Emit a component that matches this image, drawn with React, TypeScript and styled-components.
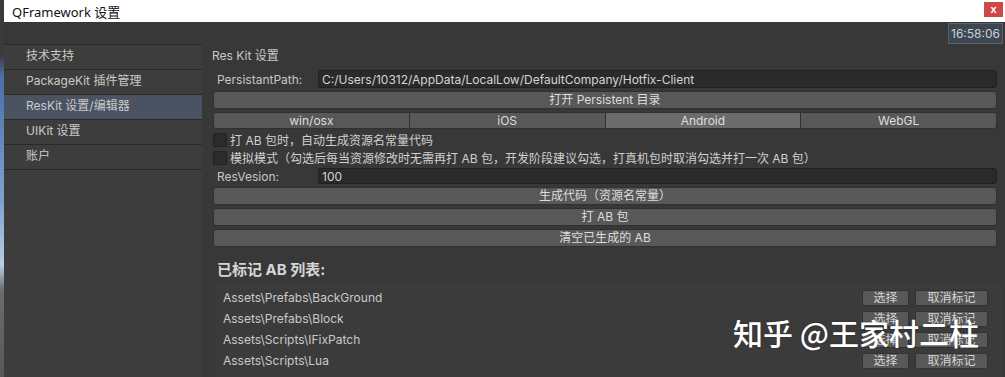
import styled, { createGlobalStyle } from 'styled-components';

const GlobalStyle = createGlobalStyle`
    html, body {
        margin: 0;
        padding: 0;
        background: #383838;
    }
    body {
        font-family: Inter, "Noto Sans CJK SC", sans-serif;
        font-size: 12px;
    }
`;

const Screen = styled.div`
    position: relative;
    width: 1005px;
    height: 377px;
    display: flex;
    overflow: hidden;
`;

// the editor behind the window, only a sliver of it shows
const EdgeStrip = styled.div`
    width: 4px;
    background: linear-gradient(
        to bottom,
        #3a3a3a 0,
        #3a3a3a 55px,
        #4a6ea6 75px,
        #7ea2cf 200px,
        #b9cde2 265px,
        #6c6c6c 290px,
        #585858 100%
    );
`;

const Frame = styled.div`
    flex: 1;
    display: flex;
    flex-direction: column;
`;

const TitleBar = styled.div`
    height: 22px;
    background: #ffffff;
    display: flex;
    align-items: center;
    justify-content: space-between;
    padding-left: 8px;
`;

const TitleText = styled.span`
    font-family: "Noto Sans", "Noto Sans CJK SC", sans-serif;
    font-size: 13px;
    color: #111;
`;

const CloseButton = styled.div`
    width: 19px;
    height: 15px;
    margin-right: 2px;
    margin-top: -4px;
    background: #cf4747;
    color: #fff;
    font-family: "Liberation Sans", sans-serif;
    font-size: 11px;
    font-weight: bold;
    line-height: 14px;
    text-align: center;
`;

const Body = styled.div`
    flex: 1;
    background: #383838;
    display: flex;
    flex-direction: column;
    min-height: 0;
`;

const TopRow = styled.div`
    height: 22px;
    display: flex;
    justify-content: flex-end;
    padding-right: 2px;
`;

const Clock = styled.div`
    margin-top: 1px;
    height: 19px;
    padding: 0 2px;
    background: #3d4752;
    border: 1px solid #56616c;
    color: #c9d0d6;
    line-height: 19px;
`;

const MainRow = styled.div`
    flex: 1;
    display: flex;
    min-height: 0;
`;

const Sidebar = styled.div`
    width: 198px;
    background: #3d3d3d;
    border-top: 1px solid #2c2c2c;
    box-sizing: border-box;
`;

const SideItem = styled.div<{ $active?: boolean }>`
    height: 24px;
    line-height: 22px;
    padding-left: 22px;
    border-bottom: 1px solid #2a2a2a;
    color: #cacaca;
    background: ${({ $active }) => ($active ? '#4b5363' : 'transparent')};
`;

const Content = styled.div`
    flex: 1;
    display: flex;
    flex-direction: column;
    padding: 0 8px 0 11px;
    min-width: 0;
`;

const Stack = styled.div`
    display: flex;
    flex-direction: column;
    gap: 3px;
`;

const SectionTitle = styled.div`
    height: 23px;
    line-height: 23px;
    margin-left: -1px;
    color: #c8c8c8;
`;

const FieldRow = styled.div<{ $h: number }>`
    display: flex;
    align-items: center;
    height: ${({ $h }) => $h}px;
`;

const Label = styled.span`
    width: 105px;
    flex-shrink: 0;
    padding-left: 4px;
    box-sizing: border-box;
    color: #c6c6c6;
`;

const Field = styled.div`
    flex: 1;
    height: 100%;
    box-sizing: border-box;
    background: #2a2a2a;
    border: 1px solid #212121;
    border-radius: 3px;
    padding: 0 3px;
    color: #d4d4d4;
    display: flex;
    align-items: center;
    white-space: nowrap;
`;

const Button = styled.div`
    height: 18px;
    box-sizing: border-box;
    background: #585858;
    border: 1px solid #303030;
    border-radius: 3px;
    color: #dedede;
    text-align: center;
    line-height: 16px;
`;

const Toolbar = styled.div`
    display: flex;
    height: 17px;
`;

const Segment = styled.div<{ $active?: boolean }>`
    flex: 1;
    box-sizing: border-box;
    background: ${({ $active }) => ($active ? '#6b6b6b' : '#585858')};
    border: 1px solid #303030;
    border-left: none;
    color: #dedede;
    text-align: center;
    line-height: 15px;
    &:first-child {
        border-left: 1px solid #303030;
        border-radius: 3px 0 0 3px;
    }
    &:last-child {
        border-radius: 0 3px 3px 0;
    }
`;

const CheckRow = styled.label`
    display: flex;
    align-items: center;
    gap: 3px;
    height: 15px;
    color: #d0d0d0;
    white-space: nowrap;
`;

const CheckBox = styled.span`
    width: 14px;
    height: 14px;
    box-sizing: border-box;
    background: #2b2b2b;
    border: 1px solid #222;
    border-radius: 2px;
    flex-shrink: 0;
`;

const ListTitle = styled.div`
    margin-top: 12px;
    height: 22px;
    line-height: 22px;
    padding-left: 4px;
    font-size: 15px;
    font-weight: bold;
    color: #d6d6d6;
`;

const ListBox = styled.div`
    flex: 1;
    margin: 2px -5px 0 2px;
    padding-top: 4px;
    background: #3b3b3b;
`;

const ListRow = styled.div`
    height: 21px;
    display: flex;
    align-items: center;
    gap: 6px;
    padding: 0 14px 0 8px;
    color: #cacaca;
`;

const AssetPath = styled.span`
    flex: 1;
`;

const RowButton = styled.div<{ $w: number }>`
    width: ${({ $w }) => $w}px;
    height: 16px;
    box-sizing: border-box;
    background: #585858;
    border: 1px solid #333;
    border-radius: 2px;
    color: #d4d4d4;
    text-align: center;
    line-height: 14px;
`;

const Watermark = styled.div`
    position: absolute;
    left: 733px;
    top: 317px;
    font-family: "Noto Sans CJK SC", sans-serif;
    font-size: 30px;
    font-weight: 500;
    line-height: 1;
    color: #ffffff;
    text-shadow: 0 0 2px rgba(0, 0, 0, 0.35);
    white-space: nowrap;
`;

const menu = ['技术支持', 'PackageKit 插件管理', 'ResKit 设置/编辑器', 'UIKit 设置', '账户'];
const platforms = ['win/osx', 'iOS', 'Android', 'WebGL'];
const assets = [
    'Assets\\Prefabs\\BackGround',
    'Assets\\Prefabs\\Block',
    'Assets\\Scripts\\IFixPatch',
    'Assets\\Scripts\\Lua',
];

function App() {
    return (
        <>
            <GlobalStyle />
            <Screen>
                <EdgeStrip />
                <Frame>
                    <TitleBar>
                        <TitleText>QFramework 设置</TitleText>
                        <CloseButton>x</CloseButton>
                    </TitleBar>
                    <Body>
                        <TopRow>
                            <Clock>16:58:06</Clock>
                        </TopRow>
                        <MainRow>
                            <Sidebar>
                                {menu.map((m) => (
                                    <SideItem key={m} $active={m === 'ResKit 设置/编辑器'}>
                                        {m}
                                    </SideItem>
                                ))}
                            </Sidebar>
                            <Content>
                                <Stack>
                                    <SectionTitle>Res Kit 设置</SectionTitle>
                                    <FieldRow $h={18}>
                                        <Label>PersistantPath:</Label>
                                        <Field>C:/Users/10312/AppData/LocalLow/DefaultCompany/Hotfix-Client</Field>
                                    </FieldRow>
                                    <Button>打开 Persistent 目录</Button>
                                    <Toolbar>
                                        {platforms.map((p) => (
                                            <Segment key={p} $active={p === 'Android'}>
                                                {p}
                                            </Segment>
                                        ))}
                                    </Toolbar>
                                    <CheckRow>
                                        <CheckBox />
                                        打 AB 包时，自动生成资源名常量代码
                                    </CheckRow>
                                    <CheckRow>
                                        <CheckBox />
                                        模拟模式（勾选后每当资源修改时无需再打 AB 包，开发阶段建议勾选，打真机包时取消勾选并打一次 AB 包）
                                    </CheckRow>
                                    <FieldRow $h={16}>
                                        <Label>ResVesion:</Label>
                                        <Field>100</Field>
                                    </FieldRow>
                                    <Button>生成代码（资源名常量）</Button>
                                    <Button>打 AB 包</Button>
                                    <Button>清空已生成的 AB</Button>
                                </Stack>
                                <ListTitle>已标记 AB 列表:</ListTitle>
                                <ListBox>
                                    {assets.map((a) => (
                                        <ListRow key={a}>
                                            <AssetPath>{a}</AssetPath>
                                            <RowButton $w={47}>选择</RowButton>
                                            <RowButton $w={73}>取消标记</RowButton>
                                        </ListRow>
                                    ))}
                                </ListBox>
                            </Content>
                        </MainRow>
                    </Body>
                </Frame>
                <Watermark>知乎 @王家村二柱</Watermark>
            </Screen>
        </>
    );
}

export default App;
